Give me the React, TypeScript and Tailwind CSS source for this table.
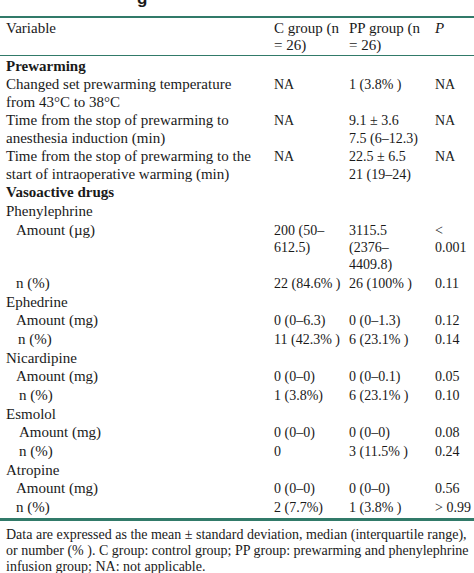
import React from 'react';

interface Row {
  label: React.ReactNode;
  c?: React.ReactNode;
  pp?: React.ReactNode;
  p?: React.ReactNode;
  bold?: boolean;
  indent?: string;
}

const rows: Row[] = [
  { label: 'Prewarming', bold: true },
  { label: <>Changed set prewarming temperature<br />from 43°C to 38°C</>, c: 'NA', pp: '1 (3.8% )', p: 'NA' },
  { label: <>Time from the stop of prewarming to<br />anesthesia induction (min)</>, c: 'NA', pp: <>9.1 ± 3.6<br />7.5 (6–12.3)</>, p: 'NA' },
  { label: <>Time from the stop of prewarming to the<br />start of intraoperative warming (min)</>, c: 'NA', pp: <>22.5 ± 6.5<br />21 (19–24)</>, p: 'NA' },
  { label: 'Vasoactive drugs', bold: true },
  { label: 'Phenylephrine' },
  { label: 'Amount (µg)', indent: 'pl-[10px]', c: <>200 (50–<br />612.5)</>, pp: <>3115.5<br />(2376–<br />4409.8)</>, p: <>&lt;<br />0.001</> },
  { label: 'n (%)', indent: 'pl-[10px]', c: '22 (84.6% )', pp: '26 (100% )', p: '0.11' },
  { label: 'Ephedrine' },
  { label: 'Amount (mg)', indent: 'pl-[10px]', c: '0 (0–6.3)', pp: '0 (0–1.3)', p: '0.12' },
  { label: 'n (%)', indent: 'pl-[12px]', c: '11 (42.3% )', pp: '6 (23.1% )', p: '0.14' },
  { label: 'Nicardipine' },
  { label: 'Amount (mg)', indent: 'pl-[10px]', c: '0 (0–0)', pp: '0 (0–0.1)', p: '0.05' },
  { label: 'n (%)', indent: 'pl-[13px]', c: '1 (3.8%)', pp: '6 (23.1% )', p: '0.10' },
  { label: 'Esmolol' },
  { label: 'Amount (mg)', indent: 'pl-[13px]', c: '0 (0–0)', pp: '0 (0–0)', p: '0.08' },
  { label: 'n (%)', indent: 'pl-[13px]', c: '0', pp: '3 (11.5% )', p: '0.24' },
  { label: 'Atropine' },
  { label: 'Amount (mg)', indent: 'pl-[10px]', c: '0 (0–0)', pp: '0 (0–0)', p: '0.56' },
  { label: 'n (%)', indent: 'pl-[10px]', c: '2 (7.7%)', pp: '1 (3.8% )', p: '> 0.99' },
];

const cols = 'grid grid-cols-[274px_75px_86px_39px]';

const App = () => {
  return (
    <div className="w-[474px] h-[573px] bg-white text-[#1a1a1a] overflow-hidden" style={{ fontFamily: '"Liberation Serif", serif' }}>
      {/* clipped title above the table */}
      <div className="h-[16px] overflow-hidden relative">
        <div className="absolute left-[137px] -top-[14px] text-[17px] font-bold" style={{ fontFamily: '"Liberation Sans", sans-serif' }}>g</div>
      </div>

      <div className="border-t-2 border-[#317a69]" />

      {/* header */}
      <div className={`${cols} text-[15px] leading-[17px] pt-[2px] pb-[1px] border-b border-[#317a69]`}>
        <div className="pl-[6px]">Variable</div>
        <div className="whitespace-nowrap">C group (n<br />= 26)</div>
        <div className="whitespace-nowrap">PP group (n<br />= 26)</div>
        <div className="italic">P</div>
      </div>

      {/* body */}
      <div className="text-[15px] leading-[17.3px] pt-[1px]">
        {rows.map((r, i) => (
          <div key={i} className={`${cols} py-[0.7px]`}>
            <div className={`pl-[6px] whitespace-nowrap ${r.bold ? 'font-bold' : ''}`}>
              <div className={r.indent ?? ''}>{r.label}</div>
            </div>
            <div className="whitespace-nowrap text-[14px]">{r.c}</div>
            <div className="whitespace-nowrap text-[14px]">{r.pp}</div>
            <div className="whitespace-nowrap text-[14px]">{r.p}</div>
          </div>
        ))}
      </div>

      <div className="border-t-[3px] border-[#317a69] mt-[1px]" />

      <p className="px-[6px] pt-[6px] text-[14px] leading-[16px] whitespace-nowrap">
        Data are expressed as the mean ± standard deviation, median (interquartile range),
        <br />
        or number (% ). C group: control group; PP group: prewarming and phenylephrine
        <br />
        infusion group; NA: not applicable.
      </p>
    </div>
  );
};

export default App;
